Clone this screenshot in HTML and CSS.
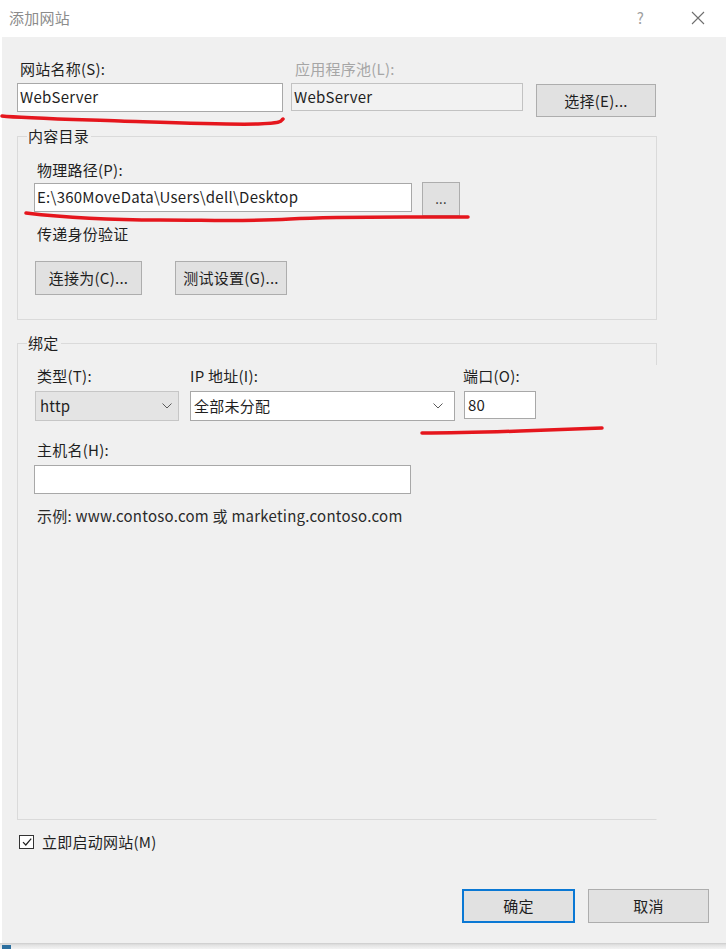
FILE: index.html
```html
<!DOCTYPE html>
<html lang="zh-CN">
<head>
<meta charset="utf-8">
<title>添加网站</title>
<link rel="stylesheet" href="styles.css">
</head>
<body>
<div class="page">
  <header class="titlebar">
    <span class="title">添加网站</span>
    <span class="help">?</span>
    <svg class="close" width="14" height="14" viewBox="0 0 14 14"><path d="M1 1L13 13M13 1L1 13" stroke="#6e6e6e" stroke-width="1.1" fill="none"/></svg>
  </header>

  <main class="dialog">
    <div class="top-row">
      <div class="col">
        <label class="lbl">网站名称(S):</label>
        <div class="input w-name">WebServer</div>
      </div>
      <div class="col">
        <label class="lbl disabled">应用程序池(L):</label>
        <div class="input readonly w-pool">WebServer</div>
      </div>
      <div class="col end">
        <button class="btn w-select">选择(E)...</button>
      </div>
    </div>

    <section class="group g-content">
      <div class="legend">内容目录</div>
      <div class="group-body content-body">
        <label class="lbl">物理路径(P):</label>
        <div class="path-row">
          <div class="input w-path">E:\360MoveData\Users\dell\Desktop</div>
          <button class="btn w-dots">...</button>
        </div>
        <div class="lbl auth">传递身份验证</div>
        <div class="btn-row">
          <button class="btn w-connect">连接为(C)...</button>
          <button class="btn w-test">测试设置(G)...</button>
        </div>
      </div>
    </section>

    <section class="group g-binding">
      <div class="legend">绑定</div>
      <div class="group-body binding-body">
        <div class="bind-row">
          <div class="col c-type">
            <label class="lbl">类型(T):</label>
            <div class="select gray">
              <span>http</span>
              <svg width="10" height="6" viewBox="0 0 10 6"><path d="M0.5 0.5L5 5L9.5 0.5" stroke="#5a5a5a" stroke-width="1" fill="none"/></svg>
            </div>
          </div>
          <div class="col c-ip">
            <label class="lbl">IP 地址(I):</label>
            <div class="select">
              <span>全部未分配</span>
              <svg width="10" height="6" viewBox="0 0 10 6"><path d="M0.5 0.5L5 5L9.5 0.5" stroke="#5a5a5a" stroke-width="1" fill="none"/></svg>
            </div>
          </div>
          <div class="col c-port">
            <label class="lbl">端口(O):</label>
            <div class="input w-port">80</div>
          </div>
        </div>
        <label class="lbl host-lbl">主机名(H):</label>
        <div class="input w-host"></div>
        <div class="lbl example">示例: www.contoso.com 或 marketing.contoso.com</div>
      </div>
    </section>

    <div class="check-row">
      <span class="checkbox">
        <svg width="12" height="12" viewBox="0 0 12 12"><path d="M2 6.2L4.8 9L10.2 2.6" stroke="#222" stroke-width="1.2" fill="none"/></svg>
      </span>
      <span class="check-text">立即启动网站(M)</span>
    </div>

    <div class="footer-row">
      <button class="btn primary w-ok">确定</button>
      <button class="btn w-cancel">取消</button>
    </div>
  </main>
  <div class="bottom-strip"><span class="task-mark"></span></div>

  <svg class="annot" width="726" height="949" viewBox="0 0 726 949">
    <path d="M2 116 C 20 118, 60 119, 120 121 S 230 125, 258 124 S 280 121, 283 119" stroke="#e5161d" stroke-width="3.5" fill="none" stroke-linecap="round"/>
    <path d="M26 213 C 60 217, 110 220, 160 220 S 240 222, 290 219 S 400 217, 468 217" stroke="#e5161d" stroke-width="3.5" fill="none" stroke-linecap="round"/>
    <path d="M422 433 C 460 433, 490 432, 520 431 S 580 429, 602 428" stroke="#e5161d" stroke-width="3.5" fill="none" stroke-linecap="round"/>
  </svg>
</div>
</body>
</html>
```

FILE: styles.css
```css
* { box-sizing: border-box; }
html, body {
  margin: 0;
  padding: 0;
  background: #ffffff;
}
body {
  font-family: "Noto Sans CJK SC", "Noto Sans", sans-serif;
  font-size: 15px;
  letter-spacing: 0.25px;
  color: #1f1f1f;
}
.page {
  position: relative;
  width: 726px;
  height: 949px;
  overflow: hidden;
  display: flex;
  flex-direction: column;
}
.titlebar {
  height: 37px;
  background: #ffffff;
  display: flex;
  align-items: center;
  padding-left: 9px;
}
.title {
  color: #8c8c8c;
  font-size: 15px;
  line-height: 20px;
  flex: 1;
  margin-top: -1px;
}
.help {
  color: #a0a0a0;
  font-size: 15px;
  line-height: 20px;
  margin-right: 47px;
  margin-top: -1px;
}
.close {
  margin-right: 21px;
  margin-top: -1px;
}
.dialog {
  flex: 1;
  margin-left: 2px;
  background: #f0f0f0;
  padding: 22px 17px 0 15px;
  display: flex;
  flex-direction: column;
}
.lbl {
  display: block;
  line-height: 20px;
  height: 20px;
  padding-left: 3px;
  white-space: nowrap;
}
.lbl.disabled { color: #a6a6a6; padding-left: 4px; }
.input {
  background: #ffffff;
  border: 1px solid #a8a8a8;
  height: 29px;
  line-height: 26px;
  padding-left: 2px;
  white-space: nowrap;
  overflow: hidden;
}
.input.readonly {
  background: #f2f2f2;
  border-color: #c2c2c2;
}
.btn {
  font-family: inherit;
  font-size: 15px;
  letter-spacing: 0.25px;
  color: #1f1f1f;
  background: #e1e1e1;
  border: 1px solid #adadad;
  padding: 0;
  height: 34px;
  line-height: 30px;
  text-align: center;
}
.btn.primary {
  border: 2px solid #0a78d4;
}
.top-row {
  display: flex;
  align-items: flex-start;
}
.col { display: flex; flex-direction: column; }
.top-row .col .lbl { margin-bottom: 4px; }
.top-row .col:nth-child(2) { margin-left: 8px; }
.top-row .col.end { margin-left: 13px; padding-top: 25px; }
.w-name { width: 266px; }
.w-pool { width: 232px; height: 28px; }
.w-select { width: 120px; height: 33px; }

.group {
  width: 640px;
  border: 1px solid #dadada;
  position: relative;
}
.legend {
  width: fit-content;
  margin: -11px 0 0 9px;
  padding: 0 2px 0 1px;
  background: #f0f0f0;
  line-height: 20px;
  height: 20px;
}
.g-content { margin-top: 19px; height: 184px; }
.content-body { padding: 14px 0 0 16px; }
.content-body > .lbl { margin-bottom: 2px; }
.path-row {
  display: flex;
  align-items: flex-start;
}
.w-path { width: 378px; margin-top: 1px; padding-left: 2px; }
.w-dots { width: 38px; height: 34px; margin-left: 10px; line-height: 28px; font-size: 13px; }
.auth { margin-top: 8px; }
.btn-row {
  display: flex;
  gap: 33px;
  margin-top: 17px;
  padding-left: 1px;
}
.w-connect { width: 107px; }
.w-test { width: 112px; }

.g-binding {
  margin-top: 23px;
  height: 477px;
  border-right-color: transparent;
}
.g-binding::after {
  content: "";
  position: absolute;
  right: -1px;
  top: -1px;
  width: 1px;
  height: 22px;
  background: #dadada;
}
.binding-body { padding: 13px 0 0 16px; }
.bind-row { display: flex; align-items: flex-start; }
.bind-row .lbl { margin-bottom: 5px; }
.c-ip { margin-left: 11px; }
.c-ip .lbl { padding-left: 0; }
.c-port { margin-left: 9px; }
.c-port .lbl { padding-left: 0; margin-left: -1px; }
.select {
  height: 30px;
  display: flex;
  align-items: center;
  justify-content: space-between;
  border: 1px solid #a8a8a8;
  background: #ffffff;
  padding: 0 11px 0 3px;
}
.select span { line-height: 26px; }
.c-type .select {
  width: 144px;
  margin-left: 1px;
  background: #e4e4e4;
  border-color: #c6c6c6;
  padding-left: 4px;
  padding-right: 6px;
}
.c-ip .select { width: 265px; }
.w-port { width: 72px; height: 28px; padding-left: 3px; }
.host-lbl { margin-top: 19px; }
.w-host { width: 377px; height: 29px; margin-top: 5px; }
.example { margin-top: 12px; color: #2a2a2a; }

.check-row {
  display: flex;
  align-items: center;
  margin-top: 12px;
  height: 20px;
}
.checkbox {
  width: 15px;
  height: 14px;
  margin-left: 2px;
  border: 1px solid #333333;
  background: #ffffff;
  display: flex;
  align-items: center;
  justify-content: center;
}
.check-text { margin-left: 8px; line-height: 20px; }
.footer-row {
  display: flex;
  justify-content: flex-end;
  gap: 13px;
  margin-top: 37px;
}
.w-ok { width: 113px; }
.w-cancel { width: 121px; }

.bottom-strip {
  height: 6px;
  background: linear-gradient(#cbcbcb, #e2e2e2 2px, #f3f3f3);
  position: relative;
}
.task-mark {
  position: absolute;
  left: 2px;
  top: 2px;
  width: 9px;
  height: 4px;
  background: #2c6f9f;
}
.annot {
  position: absolute;
  left: 0;
  top: 0;
  pointer-events: none;
}
```
